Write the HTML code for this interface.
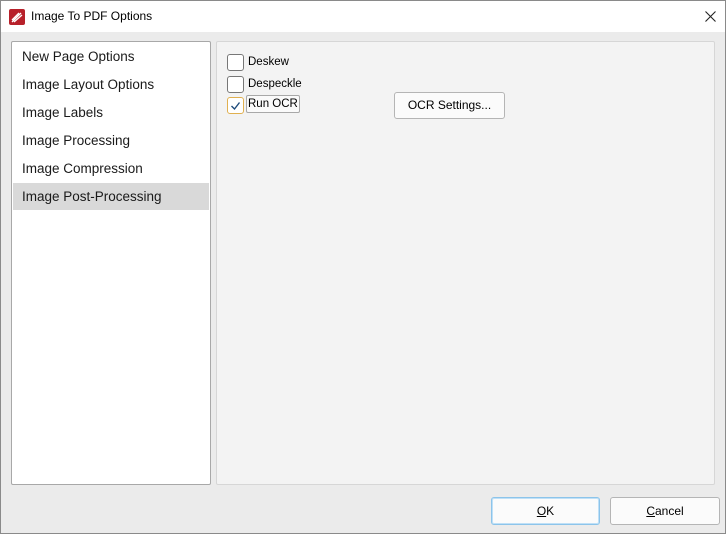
<!DOCTYPE html><html><head><style>
body{margin:0;width:726px;height:534px;overflow:hidden;font-family:"Liberation Sans",sans-serif;}
.win{position:absolute;left:0;top:0;width:724px;height:532px;border:1px solid #8a8a8a;background:#ebebeb;}
.title{position:absolute;left:0;top:0;width:724px;height:31px;background:#fff;}
.tt{position:absolute;left:30px;top:8px;font-size:12px;color:#000}
.lp{position:absolute;left:10px;top:40px;width:198px;height:442px;background:#fff;border:1px solid #a8a8a8;border-radius:2px}
.it{position:absolute;left:1px;width:196px;height:27px;font-size:13.5px;color:#1a1a1a;line-height:27px;text-indent:9px}
.sel{background:#d9d9d9}
.rp{position:absolute;left:215px;top:40px;width:497px;height:442px;background:#f3f3f3;border:1px solid #d6d6d6;border-radius:2px}
.cb{position:absolute;width:15px;height:15px;border:1px solid #777;border-radius:3px;background:#fff}
.lb{position:absolute;font-size:11.5px;color:#000}
.btn{position:absolute;background:#fbfbfb;border:1px solid #b5b5b5;border-radius:3px;font-size:12px;text-align:center;color:#000}
</style></head><body><div class="win">
<div class="title"><svg style="position:absolute;left:8px;top:8px" width="16" height="16"><rect width="16" height="16" rx="2" fill="#b7202a"/><path d="M3 13 L12 4 M5 13 L13 6 M3 11 L10 4" stroke="#fff" stroke-width="1.3"/></svg><span class="tt">Image To PDF Options</span>
<svg style="position:absolute;left:704px;top:10px" width="11" height="11"><path d="M0.5 0.5 L10.5 10.5 M10.5 0.5 L0.5 10.5" stroke="#222" stroke-width="1.1"/></svg></div>
<div class="lp">
<div class="it" style="top:1px">New Page Options</div>
<div class="it" style="top:29px">Image Layout Options</div>
<div class="it" style="top:57px">Image Labels</div>
<div class="it" style="top:85px">Image Processing</div>
<div class="it" style="top:113px">Image Compression</div>
<div class="it sel" style="top:141px">Image Post-Processing</div>
</div>
<div class="rp"></div>
<div class="cb" style="left:226px;top:53px"></div><div class="lb" style="left:247px;top:55px">Deskew</div>
<div class="cb" style="left:226px;top:75px"></div><div class="lb" style="left:247px;top:77px">Despeckle</div>
<div class="cb" style="left:226px;top:96px;border:1px solid #e0b050"><svg width="15" height="15"><path d="M3.5 8 L6.5 11 L11.5 4.5" stroke="#1c4a7a" stroke-width="1.4" fill="none"/></svg></div>
<div class="lb" style="left:245px;top:94px;border:1px solid #a8a8a8;border-radius:2px;padding:2px 1px;background:#fafafa">Run OCR</div>
<div class="btn" style="left:393px;top:91px;width:109px;height:25px;line-height:25px">OCR Settings...</div>
<div class="btn" style="left:490px;top:496px;width:107px;height:26px;line-height:26px;border-color:#8cc4ea;box-shadow:inset 0 0 0 1px #bfe0f7"><u>O</u>K</div>
<div class="btn" style="left:609px;top:496px;width:108px;height:26px;line-height:26px"><u>C</u>ancel</div>
</div></body></html>
